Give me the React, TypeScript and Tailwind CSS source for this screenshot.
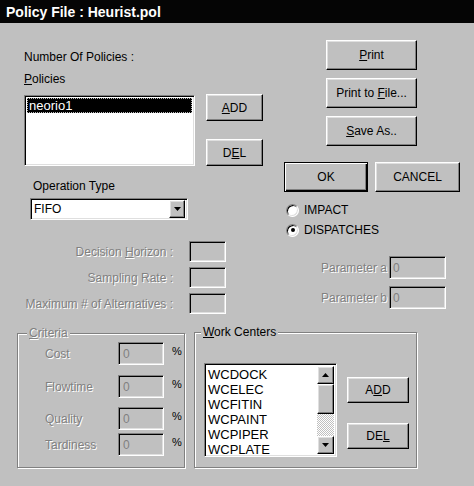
import React from "react";

const raised =
  "bg-[#c0c0c0] border border-t-white border-l-white border-b-black border-r-black shadow-[inset_-1px_-1px_0_#808080,inset_1px_1px_0_#dfdfdf]";
const sunken =
  "border border-t-[#808080] border-l-[#808080] border-b-white border-r-white shadow-[inset_1px_1px_0_#000,inset_-1px_-1px_0_#dfdfdf]";
const etched =
  "border border-[#808080] shadow-[inset_1px_1px_0_#fff,1px_1px_0_#fff]";
const disabledText = "text-[#808080] [text-shadow:1px_1px_0_#fff]";

function Btn({
  className,
  children,
}: {
  className: string;
  children: React.ReactNode;
}) {
  return (
    <div className={`${raised} ${className} flex items-center justify-center`}>
      {children}
    </div>
  );
}

function DownTri() {
  return (
    <svg width="7" height="4" viewBox="0 0 7 4">
      <path d="M0 0h7L3.5 4z" fill="#000" />
    </svg>
  );
}

function UpTri() {
  return (
    <svg width="7" height="4" viewBox="0 0 7 4">
      <path d="M0 4h7L3.5 0z" fill="#000" />
    </svg>
  );
}

function DisabledRow({ label }: { label: React.ReactNode }) {
  return (
    <div className="flex items-center h-[21px]">
      <div className={`w-[173px] text-right ${disabledText}`}>{label}</div>
      <div className={`${sunken} ml-[16px] w-[37px] h-[21px]`} />
    </div>
  );
}

function CritRow({ label, mt }: { label: string; mt: string }) {
  return (
    <div className={`flex ${mt}`}>
      <div className={`w-[73px] h-[23px] flex items-center ${disabledText}`}>
        {label}
      </div>
      <div
        className={`${sunken} w-[46px] h-[23px] flex items-center pl-[4px] text-[#808080]`}
      >
        0
      </div>
      <div className="ml-[8px] mt-[3px] text-[11px] leading-[12px]">%</div>
    </div>
  );
}

export default function App() {
  return (
    <div className="w-[474px] h-[486px] bg-[#c0c0c0] flex flex-col overflow-hidden text-[12px] leading-[14px] text-black font-['Liberation_Sans',Arial,sans-serif]">
      {/* Title bar */}
      <div className="h-[23px] bg-[#050505] flex items-center pl-[6px] text-white font-bold text-[14px] shrink-0">
        Policy File : Heurist.pol
      </div>

      {/* Top section */}
      <div className="flex h-[309px] shrink-0">
        {/* Left column */}
        <div className="w-[284px] flex flex-col">
          <div className="mt-[27px] ml-[24px]">Number Of Policies :</div>
          <div className="mt-[8px] ml-[24px]">
            <span className="underline underline-offset-[1px]">P</span>olicies
          </div>
          <div className="mt-[8px] ml-[24px] flex items-start">
            <div className={`${sunken} mt-[1px] w-[171px] h-[71px] bg-white p-[2px]`}>
              <div className="h-[15px] bg-black border border-dotted border-[#bbbbbb] text-white text-[13px] leading-[13px] pl-[1px]">
                neorio1
              </div>
            </div>
            <div className="ml-[11px] flex flex-col gap-[18px]">
              <Btn className="w-[57px] h-[27px]">
                <span>
                  <span className="underline underline-offset-[1px]">A</span>DD
                </span>
              </Btn>
              <Btn className="w-[57px] h-[27px]">
                <span>
                  D<span className="underline underline-offset-[1px]">E</span>L
                </span>
              </Btn>
            </div>
          </div>
          <div className="mt-[13px] ml-[33px]">Operation Type</div>
          <div
            className={`${sunken} mt-[5px] ml-[30px] w-[158px] h-[22px] bg-white flex items-center p-[2px]`}
          >
            <div className="flex-1 pl-[1px]">FIFO</div>
            <Btn className="w-[16px] h-[18px]">
              <DownTri />
            </Btn>
          </div>
          <div className="mt-[21px] flex flex-col gap-[5px]">
            <DisabledRow
              label={
                <span>
                  Decision <span className="underline underline-offset-[1px]">H</span>orizon :
                </span>
              }
            />
            <DisabledRow label="Sampling Rate :" />
            <DisabledRow label="Maximum # of Alternatives :" />
          </div>
        </div>

        {/* Right column */}
        <div className="flex-1 flex flex-col">
          <div className="mt-[17px] ml-[42px] flex flex-col gap-[8px]">
            <Btn className="w-[91px] h-[30px]">
              <span>
                <span className="underline underline-offset-[1px]">P</span>rint
              </span>
            </Btn>
            <Btn className="w-[91px] h-[30px]">
              <span>
                Print to <span className="underline underline-offset-[1px]">F</span>ile...
              </span>
            </Btn>
            <Btn className="w-[91px] h-[30px]">
              <span>
                <span className="underline underline-offset-[1px]">S</span>ave As..
              </span>
            </Btn>
          </div>
          <div className="mt-[16px] flex gap-[7px]">
            <div className="w-[84px] h-[30px] border border-black bg-[#c0c0c0] shadow-[inset_1px_1px_0_#fff,inset_-1px_-1px_0_#000,inset_-2px_-2px_0_#808080] flex items-center justify-center">
              OK
            </div>
            <Btn className="w-[85px] h-[30px]">CANCEL</Btn>
          </div>
          <div className="mt-[10px] ml-[2px] flex items-center h-[16px]">
            <div className="w-[13px] h-[13px] rounded-full bg-white border border-t-[#808080] border-l-[#808080] border-b-white border-r-white shadow-[inset_1px_1px_0_#000,inset_-1px_-1px_0_#dfdfdf]" />
            <div className="ml-[5px]">IMPACT</div>
          </div>
          <div className="mt-[4px] ml-[2px] flex items-center h-[16px]">
            <div className="w-[13px] h-[13px] rounded-full bg-white border border-t-[#808080] border-l-[#808080] border-b-white border-r-white shadow-[inset_1px_1px_0_#000,inset_-1px_-1px_0_#dfdfdf] flex items-center justify-center">
              <div className="w-[4px] h-[4px] rounded-full bg-black" />
            </div>
            <div className="ml-[5px]">DISPATCHES</div>
          </div>
          <div className="mt-[18px] flex items-center">
            <div className={`w-[103px] text-right ${disabledText}`}>Parameter a</div>
            <div
              className={`${sunken} ml-[2px] w-[57px] h-[23px] flex items-center pl-[3px] text-[#808080]`}
            >
              0
            </div>
          </div>
          <div className="mt-[7px] flex items-center">
            <div className={`w-[103px] text-right ${disabledText}`}>Parameter b</div>
            <div
              className={`${sunken} ml-[2px] w-[57px] h-[23px] flex items-center pl-[3px] text-[#808080]`}
            >
              0
            </div>
          </div>
        </div>
      </div>

      {/* Bottom section */}
      <div className="flex pl-[17px] gap-[9px]">
        <div className={`relative w-[168px] h-[135px] mt-[1px] ${etched}`}>
          <div className="absolute left-[9px] -top-[8px] px-[2px] bg-[#c0c0c0]">
            <span className={disabledText}>
              <span className="underline underline-offset-[1px]">C</span>riteria
            </span>
          </div>
          <div className="pt-[8px] pl-[27px] flex flex-col">
            <CritRow label="Cost" mt="mt-0" />
            <CritRow label="Flowtime" mt="mt-[10px]" />
            <CritRow label="Quality" mt="mt-[9px]" />
            <CritRow label="Tardiness" mt="mt-[3px]" />
          </div>
        </div>

        <div className={`relative w-[223px] h-[136px] ${etched}`}>
          <div className="absolute left-[6px] -top-[8px] px-[2px] bg-[#c0c0c0]">
            <span className="underline underline-offset-[1px]">W</span>ork Centers
          </div>
          <div className="pt-[30px] pl-[9px] flex items-start">
            <div className={`${sunken} w-[133px] h-[94px] bg-white p-[2px] flex`}>
              <div className="flex-1 pl-[1px] pt-[1px] text-[13px] leading-[15px]">
                <div>WCDOCK</div>
                <div>WCELEC</div>
                <div>WCFITIN</div>
                <div>WCPAINT</div>
                <div>WCPIPER</div>
                <div>WCPLATE</div>
              </div>
              <div className="w-[17px] h-full flex flex-col">
                <Btn className="w-[17px] h-[18px] shrink-0">
                  <UpTri />
                </Btn>
                <div className={`${raised} w-[17px] h-[30px] shrink-0`} />
                <div className="flex-1 bg-[repeating-conic-gradient(#c0c0c0_0_25%,#ffffff_0_50%)] bg-[length:2px_2px]" />
                <Btn className="w-[17px] h-[18px] shrink-0">
                  <DownTri />
                </Btn>
              </div>
            </div>
            <div className="ml-[10px] mt-[14px] flex flex-col gap-[20px]">
              <Btn className="w-[62px] h-[26px]">
                <span>
                  A<span className="underline underline-offset-[1px]">D</span>D
                </span>
              </Btn>
              <Btn className="w-[62px] h-[26px]">
                <span>
                  DE<span className="underline underline-offset-[1px]">L</span>
                </span>
              </Btn>
            </div>
          </div>
        </div>
      </div>
    </div>
  );
}
